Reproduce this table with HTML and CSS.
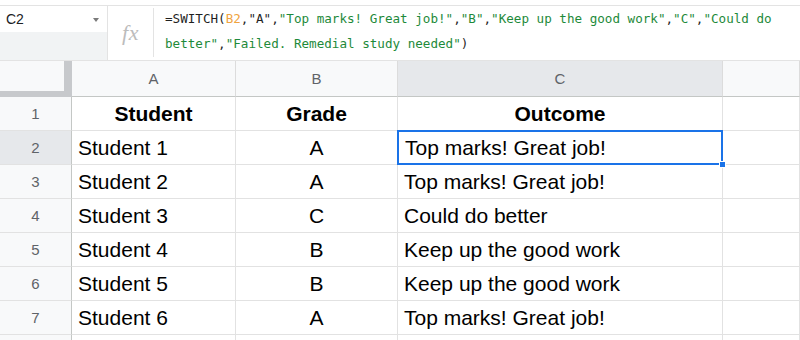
FILE: index.html
```html
<!DOCTYPE html>
<html>
<head>
<meta charset="utf-8">
<link rel="stylesheet" href="styles.css">
</head>
<body>
<div class="fbar">
  <div class="namebox">
    <div class="nb-top"><span class="ref">C2</span><span class="caret"></span></div>
    <div class="nb-bottom"></div>
  </div>
  <div class="fx"><span>fx</span></div>
  <div class="sep"></div>
  <div class="formula"><span class="k">=SWITCH(</span><span class="r">B2</span><span class="k">,"A",</span><span class="s">"Top marks! Great job!"</span><span class="k">,</span><span class="s">"B"</span><span class="k">,</span><span class="s">"Keep up the good work"</span><span class="k">,</span><span class="s">"C"</span><span class="k">,</span><span class="s">"Could do better"</span><span class="k">,</span><span class="s">"Failed. Remedial study needed"</span><span class="k">)</span></div>
</div>
<div class="sheet">
  <div class="corner"></div>
  <div class="ch">A</div>
  <div class="ch">B</div>
  <div class="ch sel">C</div>
  <div class="ch"></div>

  <div class="rh">1</div>
  <div class="c b ctr">Student</div>
  <div class="c b ctr">Grade</div>
  <div class="c b ctr">Outcome</div>
  <div class="c"></div>

  <div class="rh sel">2</div>
  <div class="c">Student 1</div>
  <div class="c ctr">A</div>
  <div class="c active">Top marks! Great job!<span class="handle"></span></div>
  <div class="c"></div>

  <div class="rh">3</div>
  <div class="c">Student 2</div>
  <div class="c ctr">A</div>
  <div class="c">Top marks! Great job!</div>
  <div class="c"></div>

  <div class="rh">4</div>
  <div class="c">Student 3</div>
  <div class="c ctr">C</div>
  <div class="c">Could do better</div>
  <div class="c"></div>

  <div class="rh">5</div>
  <div class="c">Student 4</div>
  <div class="c ctr">B</div>
  <div class="c">Keep up the good work</div>
  <div class="c"></div>

  <div class="rh">6</div>
  <div class="c">Student 5</div>
  <div class="c ctr">B</div>
  <div class="c">Keep up the good work</div>
  <div class="c"></div>

  <div class="rh">7</div>
  <div class="c">Student 6</div>
  <div class="c ctr">A</div>
  <div class="c">Top marks! Great job!</div>
  <div class="c"></div>

  <div class="rh"></div>
  <div class="c"></div>
  <div class="c"></div>
  <div class="c"></div>
  <div class="c"></div>
</div>
</body>
</html>
```
FILE: styles.css
```css
* { box-sizing: border-box; }
html, body {
  margin: 0;
  padding: 0;
  background: #ffffff;
  width: 800px;
  height: 340px;
  overflow: hidden;
  font-family: "Liberation Sans", Arial, sans-serif;
}

.fbar {
  margin-top: 5px;
  height: 56px;
  display: flex;
  border-top: 1px solid #e3e3e3;
  border-bottom: 1px solid #e3e3e3;
  background: #fff;
}
.namebox {
  width: 108px;
  display: flex;
  flex-direction: column;
  border-right: 1px solid #e3e3e3;
}
.nb-top {
  height: 26px;
  display: flex;
  align-items: center;
  justify-content: space-between;
  padding: 0 8px 0 6px;
  background: #fff;
}
.ref {
  font-size: 14px;
  color: #202124;
}
.caret {
  width: 0;
  height: 0;
  border-left: 3px solid transparent;
  border-right: 3px solid transparent;
  border-top: 4px solid #7a7a7a;
  margin-top: 1px;
}
.nb-bottom {
  flex: 1;
  background: #f1f3f4;
}
.fx {
  width: 45px;
  display: flex;
  align-items: center;
  justify-content: center;
}
.fx span {
  font-family: "Liberation Serif", "Times New Roman", serif;
  font-style: italic;
  font-size: 22px;
  color: #bcbcbc;
  letter-spacing: 0.5px;
  margin-top: 0;
}
.sep {
  width: 1px;
  background: #e3e3e3;
  margin: 2px 0 3px 0;
}
.formula {
  flex: 1;
  padding: 0 16px 0 11px;
  font-family: "DejaVu Sans Mono", "Liberation Mono", monospace;
  font-size: 12.6px;
  line-height: 25px;
  color: #202124;
}
.formula .k { color: #1f1f1f; }
.formula .r { color: #f0a340; }
.formula .s { color: #1e8a3a; }

.sheet {
  display: grid;
  grid-template-columns: 72px 164px 162px 325px 77px;
  grid-template-rows: 36px repeat(8, 34px);
  height: 279px;
  overflow: hidden;
  background: #f8f9fa;
}
.corner {
  background: #f8f9fa;
  border-right: 8px solid #c7c9cc;
  border-bottom: 6px solid #c7c9cc;
}
.ch {
  background: #f8f9fa;
  border-right: 1px solid #dcdcdc;
  border-bottom: 1px solid #c4c7c5;
  display: flex;
  align-items: center;
  justify-content: center;
  font-size: 15px;
  color: #5f6368;
}
.ch.sel { background: #e6e8eb; }
.rh {
  background: #f8f9fa;
  border-right: 1px solid #c4c7c5;
  border-bottom: 1px solid #e2e2e2;
  display: flex;
  align-items: center;
  justify-content: center;
  font-size: 15px;
  color: #5f6368;
}
.rh.sel { background: #e6e8eb; }
.c {
  background: #fff;
  border-right: 1px solid #e2e2e2;
  border-bottom: 1px solid #e2e2e2;
  display: flex;
  align-items: center;
  padding: 1px 6px 0 6px;
  font-size: 21px;
  color: #000;
  white-space: nowrap;
  overflow: visible;
}
.c.ctr { justify-content: center; }
.c.b { font-weight: bold; }
.c.active {
  position: relative;
  padding-left: 7px;
}
.c.active::after {
  content: "";
  position: absolute;
  left: -1px;
  top: -1px;
  right: -1px;
  bottom: -1px;
  border: 2px solid #1a73e8;
}
.handle {
  position: absolute;
  right: -4px;
  bottom: -4px;
  width: 7px;
  height: 7px;
  background: #1a73e8;
  border: 1px solid #fff;
  z-index: 2;
}
```
